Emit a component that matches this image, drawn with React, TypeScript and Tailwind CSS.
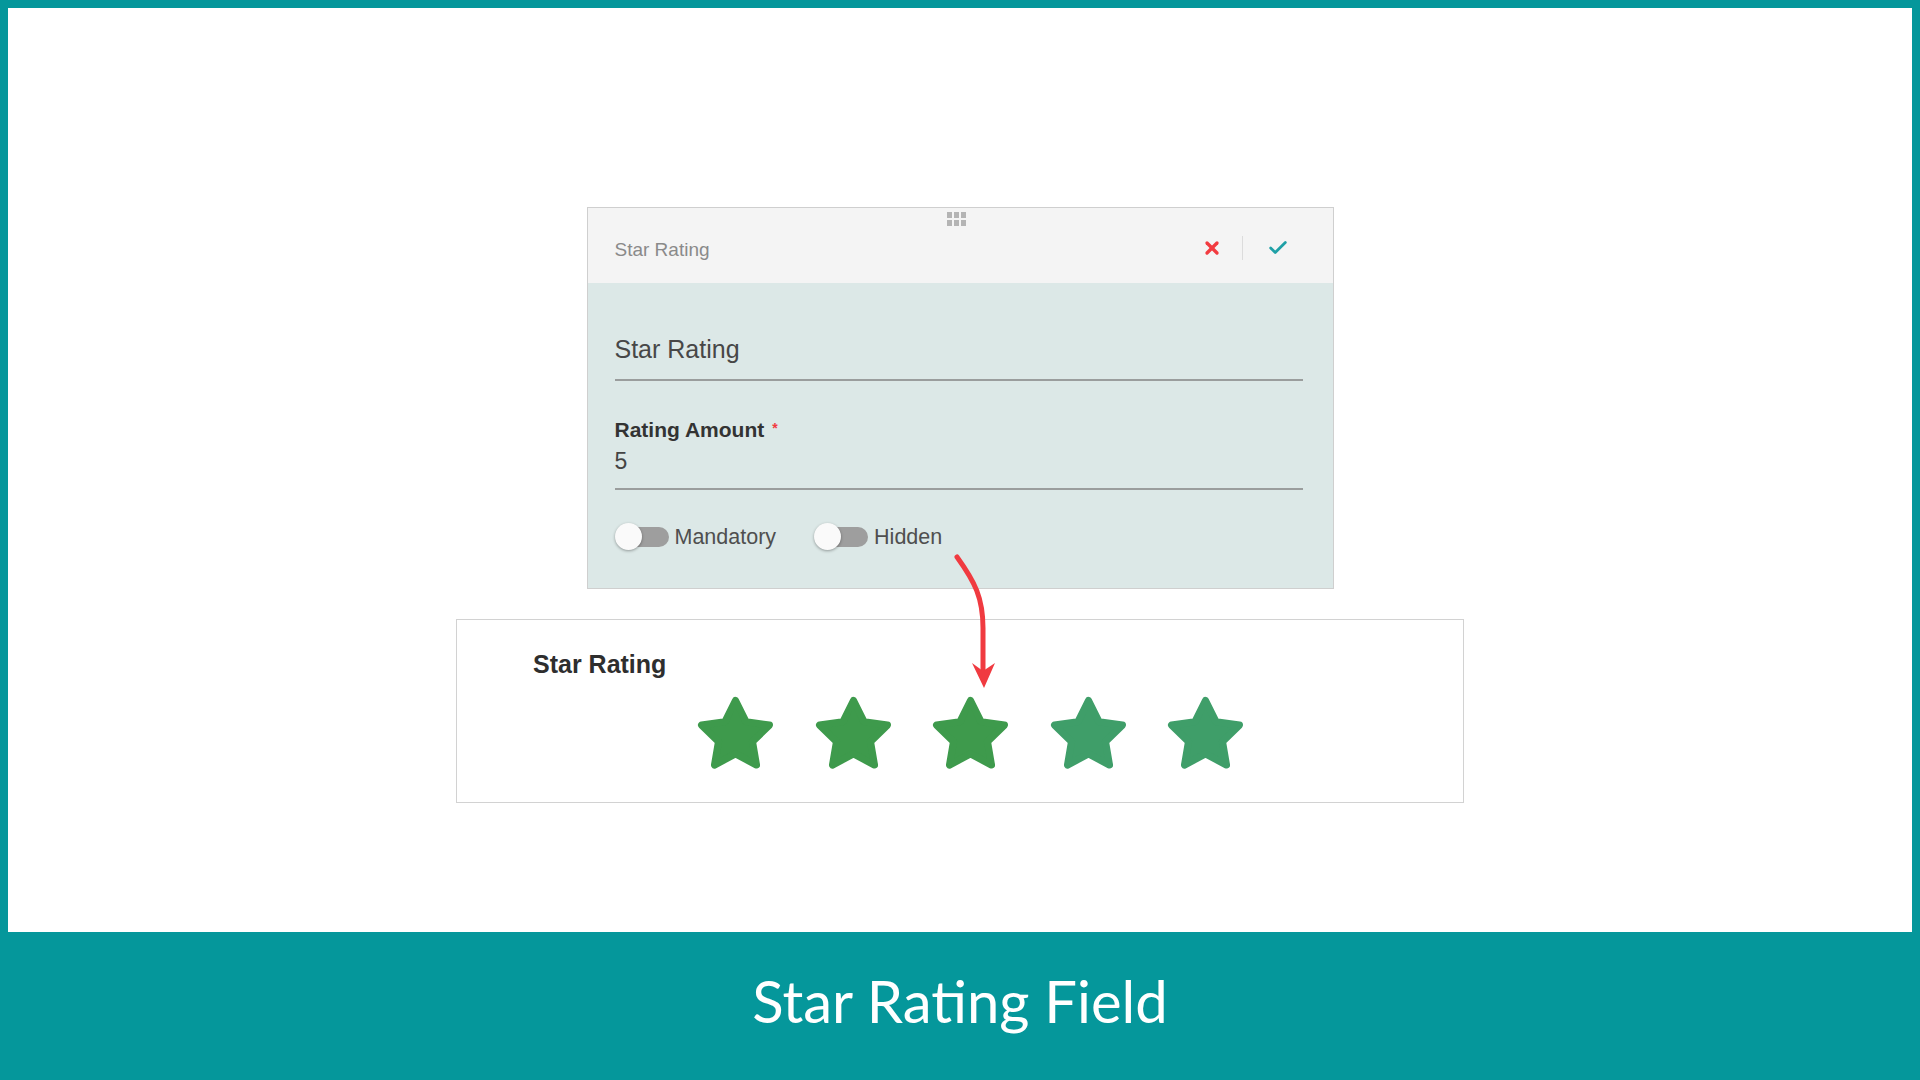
import { Check, X } from 'lucide-react';

const FORM_FONT = { fontFamily: '"Liberation Sans", Arial, sans-serif' };

/** 角の丸い星 */
function Star({ color }: { color: string }) {
  return (
    <svg
      width="77"
      height="74"
      viewBox="7 5 86 83"
      className="shrink-0"
      aria-hidden
    >
      <polygon
        points="50,10 61.76,33.8 88.04,37.64 69.04,56.2 73.52,82.36 50,70 26.48,82.36 30.96,56.2 11.96,37.64 38.24,33.8"
        fill={color}
        stroke={color}
        strokeWidth="8"
        strokeLinejoin="round"
      />
    </svg>
  );
}

/** スライドトグル（オフ状態） */
function Toggle({ label }: { label: string }) {
  return (
    <div className="flex items-center">
      <div className="relative h-[27px] w-[54px] shrink-0">
        <div className="absolute left-[5px] top-[4px] h-[20px] w-[49px] rounded-full bg-[#9e9e9e]" />
        <div className="absolute left-0 top-0 h-[27px] w-[27px] rounded-full bg-[#fafafa] shadow-[0_1px_3px_rgba(0,0,0,0.35)]" />
      </div>
      <span className="ml-[6px] text-[21.5px] leading-[24px] text-[#4f4f4f]">
        {label}
      </span>
    </div>
  );
}

function DragHandle() {
  return (
    <div className="absolute left-[359px] top-[4px] grid grid-cols-3 gap-[1.5px]">
      {[0, 1, 2, 3, 4, 5].map((i) => (
        <span key={i} className="block h-[6px] w-[5.5px] bg-[#b4b4b4]" />
      ))}
    </div>
  );
}

function FieldEditor() {
  return (
    <div
      className="flex w-[747px] flex-col border border-[#cfcfcf]"
      style={FORM_FONT}
    >
      <div className="relative flex h-[75px] items-center bg-[#f4f4f4] pl-[27px] pr-[44px] pt-[4px]">
        <DragHandle />
        <span className="mt-[4px] flex-1 text-[19px] leading-[24px] text-[#8a8a8a]">
          Star Rating
        </span>
        <X className="h-[20px] w-[20px] text-[#f23b40]" strokeWidth={4} />
        <span className="ml-[20px] mr-[24px] h-[24px] w-px bg-[#dcdcdc]" />
        <Check className="h-[22px] w-[22px] text-[#1fa0a6]" strokeWidth={3} />
      </div>

      <div className="flex flex-col bg-[#dce8e7] pb-[38px] pl-[27px] pr-[30px] pt-[51px]">
        <div className="border-b-2 border-[#9a9d9d] pb-[15px] text-[25px] leading-[30px] text-[#474747]">
          Star Rating
        </div>

        <div className="mt-[37px] text-[21px] font-bold leading-[24px] text-[#333333]">
          Rating Amount
          <span className="relative -top-[4px] ml-[8px] text-[14px] text-[#f23b40]">
            *
          </span>
        </div>
        <div className="mt-[3px] border-b-2 border-[#9a9d9d] pb-[13px] text-[23px] leading-[28px] text-[#444444]">
          5
        </div>

        <div className="mt-[33px] flex items-center gap-[38px]">
          <Toggle label="Mandatory" />
          <Toggle label="Hidden" />
        </div>
      </div>
    </div>
  );
}

function Preview() {
  const colors = ['#3e9a4c', '#3e9a4c', '#3e9a4c', '#3f9e69', '#3f9e69'];
  return (
    <div
      className="mt-[30px] flex w-[1008px] flex-col border border-[#d2d2d2] bg-white pb-[32px] pl-[76px] pt-[29px]"
      style={FORM_FONT}
    >
      <div className="text-[25px] font-bold leading-[30px] text-[#2e2e2e]">
        Star Rating
      </div>
      <div className="mt-[17px] flex gap-[40.5px] pl-[164px]">
        {colors.map((c, i) => (
          <Star key={i} color={c} />
        ))}
      </div>
    </div>
  );
}

function Arrow() {
  return (
    <svg
      className="absolute left-[937px] top-[542px]"
      width="60"
      height="150"
      viewBox="0 0 60 150"
      aria-hidden
    >
      <path
        d="M12 7 C 30 32, 38 48, 38 78 L 38 122"
        fill="none"
        stroke="#f03a40"
        strokeWidth="5"
        strokeLinecap="round"
      />
      <polygon points="27,113 38,121 50,113 39,138" fill="#f03a40" />
    </svg>
  );
}

export default function App() {
  return (
    <div className="flex h-[1080px] w-[1920px] flex-col bg-[#05979b]">
      <div className="relative mx-[8px] mt-[8px] flex h-[924px] flex-col items-center bg-white pt-[199px]">
        <FieldEditor />
        <Preview />
        <Arrow />
      </div>
      <div className="flex flex-1 items-center justify-center pb-[11px]">
        <span
          className="text-[58px] leading-[64px] text-white"
          style={{ fontFamily: 'Lato, "Open Sans", sans-serif' }}
        >
          Star Rating Field
        </span>
      </div>
    </div>
  );
}
